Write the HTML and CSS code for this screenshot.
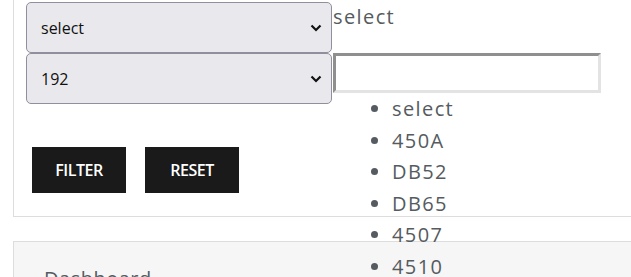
FILE: index.html
```html
<!DOCTYPE html>
<html>
<head>
<meta charset="utf-8">
<link rel="stylesheet" href="styles.css">
</head>
<body>
<div class="page">
  <div class="panel filter-panel">
    <div class="form-row">
      <div class="selects">
        <div class="select-box"><span>select</span><svg class="chev" viewBox="0 0 12 8" width="12" height="8"><path d="M1.5 1.5 L6 6 L10.5 1.5" fill="none" stroke="#111" stroke-width="2.2"/></svg></div>
        <div class="select-box"><span>192</span><svg class="chev" viewBox="0 0 12 8" width="12" height="8"><path d="M1.5 1.5 L6 6 L10.5 1.5" fill="none" stroke="#111" stroke-width="2.2"/></svg></div>
      </div>
      <div class="dropdown">
        <div class="dd-label">select</div>
        <input class="dd-input" type="text">
        <ul class="dd-list">
          <li>select</li>
          <li>450A</li>
          <li>DB52</li>
          <li>DB65</li>
          <li>4507</li>
          <li>4510</li>
        </ul>
      </div>
    </div>
    <div class="buttons">
      <button class="btn">FILTER</button>
      <button class="btn">RESET</button>
    </div>
  </div>
  <div class="panel dash-panel">
    <div class="dash-title">Dashboard</div>
  </div>
</div>
</body>
</html>
```
FILE: styles.css
```css
html, body {
  margin: 0;
  padding: 0;
  background: #fff;
  overflow: hidden;
  width: 631px;
  height: 277px;
}
.page {
  padding-left: 13px;
  width: 700px;
  margin-top: -1px;
}
.panel {
  border: 1px solid #dddddd;
  box-sizing: border-box;
}
.filter-panel {
  position: relative;
  padding: 2px 12px 23px 12px;
}
.form-row {
  display: flex;
}
.selects {
  display: flex;
  flex-direction: column;
  width: 306px;
}
.select-box {
  box-sizing: border-box;
  height: 51px;
  border: 1px solid #8f8f9d;
  border-radius: 5px;
  background: #e9e9ed;
  display: flex;
  align-items: center;
  justify-content: space-between;
  padding: 0 9px 0 14px;
  font-family: "Open Sans", sans-serif;
  font-size: 16px;
  color: #111;
}
.chev { display: block; }
.dropdown {
  position: absolute;
  left: 319px;
  top: 1px;
  width: 268px;
  z-index: 2;
}
.dd-label {
  font-family: "Open Sans", sans-serif;
  font-size: 20px;
  letter-spacing: 1.4px;
  color: #555b60;
  height: 52px;
  line-height: 32px;
}
.dd-input {
  display: block;
  box-sizing: border-box;
  width: 268px;
  height: 40px;
  margin: 0;
  border-style: solid;
  border-width: 3px;
  border-color: #8f8f8f #e3e3e3 #e3e3e3 #8f8f8f;
  background: #fff;
  padding: 0;
}
.dd-list {
  margin: 0;
  padding: 0 0 0 59px;
  font-family: "Open Sans", sans-serif;
  font-size: 20px;
  letter-spacing: 1.4px;
  color: #555b60;
  line-height: 31.5px;
}
.buttons {
  display: flex;
  gap: 19px;
  padding-left: 6px;
  margin-top: 43px;
}
.btn {
  width: 94px;
  height: 46px;
  background: #1a1a1a;
  color: #fff;
  border: none;
  border-radius: 0;
  font-family: "Open Sans", sans-serif;
  font-weight: 600;
  font-size: 16px;
  letter-spacing: -0.5px;
  padding: 0;
}
.dash-panel {
  margin-top: 24px;
  background: #f6f6f6;
  height: 60px;
  padding: 23px 30px;
}
.dash-title {
  font-family: "Open Sans", sans-serif;
  font-size: 20px;
  color: #555b60;
  letter-spacing: 0.5px;
}
```
